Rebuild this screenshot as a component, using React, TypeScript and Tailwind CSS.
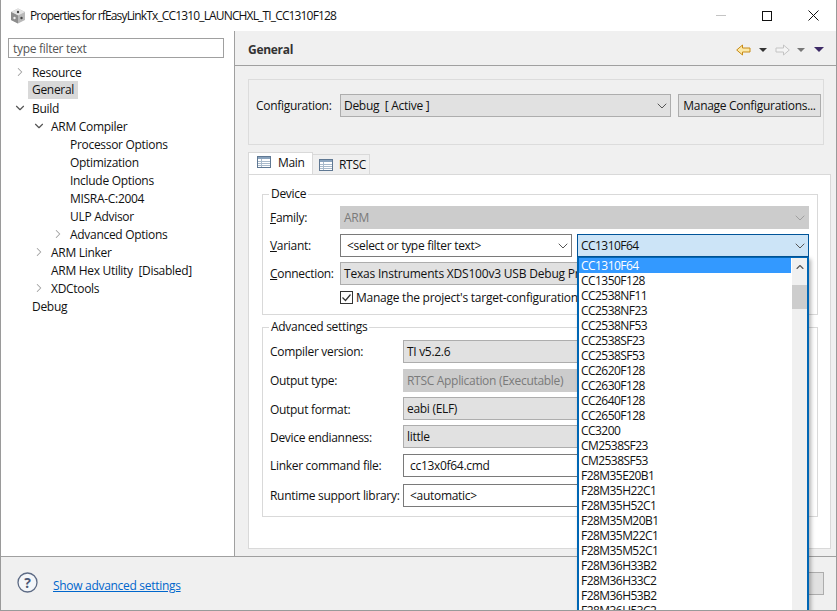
import React from 'react';
import { ChevronDown, ChevronRight, ChevronUp } from 'lucide-react';

const treeItems = [
  { label: 'Resource', depth: 0, arrow: 'right' },
  { label: 'General', depth: 0, selected: true },
  { label: 'Build', depth: 0, arrow: 'down' },
  { label: 'ARM Compiler', depth: 1, arrow: 'down' },
  { label: 'Processor Options', depth: 2 },
  { label: 'Optimization', depth: 2 },
  { label: 'Include Options', depth: 2 },
  { label: 'MISRA-C:2004', depth: 2 },
  { label: 'ULP Advisor', depth: 2 },
  { label: 'Advanced Options', depth: 2, arrow: 'right' },
  { label: 'ARM Linker', depth: 1, arrow: 'right' },
  { label: 'ARM Hex Utility  [Disabled]', depth: 1 },
  { label: 'XDCtools', depth: 1, arrow: 'right' },
  { label: 'Debug', depth: 0 },
];

const variants = [
  'CC1310F64', 'CC1350F128', 'CC2538NF11', 'CC2538NF23', 'CC2538NF53', 'CC2538SF23', 'CC2538SF53',
  'CC2620F128', 'CC2630F128', 'CC2640F128', 'CC2650F128', 'CC3200', 'CM2538SF23', 'CM2538SF53',
  'F28M35E20B1', 'F28M35H22C1', 'F28M35H52C1', 'F28M35M20B1', 'F28M35M22C1', 'F28M35M52C1',
  'F28M36H33B2', 'F28M36H33C2', 'F28M36H53B2', 'F28M36H53C2',
];

const paddings = ['pl-[12px]', 'pl-[31px]', 'pl-[50px]'];

function Chevron({ className = 'text-[#555]' }: { className?: string }) {
  return <ChevronDown size={16} strokeWidth={1.5} className={`shrink-0 ${className}`} />;
}

function Select({ value, kind = 'combo', className = '' }: { value: string; kind?: 'combo' | 'disabled' | 'text'; className?: string }) {
  const styles = {
    combo: 'bg-[#e1e1e1] border-[#adadad] text-[#111]',
    disabled: 'bg-[#cccccc] border-[#cccccc] text-[#7a7a7a]',
    text: 'bg-white border-[#7a7a7a] text-[#111]',
  }[kind];
  return (
    <div className={`h-[23px] border flex items-center justify-between pl-[3px] whitespace-pre overflow-hidden ${styles} ${className}`}>
      <span className={kind === 'text' ? 'pl-[3px]' : ''}>{value}</span>
      {kind === 'text' ? null : <Chevron className={kind === 'disabled' ? 'text-[#a0a0a0]' : 'text-[#555]'} />}
    </div>
  );
}

function TabIcon() {
  return (
    <svg width="14" height="12" viewBox="0 0 14 12" className="shrink-0">
      <rect x="0.5" y="0.5" width="13" height="11" fill="#fff" stroke="#5f7893" />
      <rect x="1" y="1" width="12" height="2" fill="#8aa3bd" />
      <path d="M1 5.5h12M1 7.5h12M1 9.5h12M4.5 3v8" stroke="#a9bacb" />
    </svg>
  );
}

function Legend({ children }: { children: string }) {
  return <span className="absolute left-[6px] top-[-9px] bg-white px-[2px] leading-[16px]">{children}</span>;
}

function Label({ text, mnemonic }: { text: string; mnemonic?: boolean }) {
  return mnemonic ? (
    <span><span className="underline">{text[0]}</span>{text.slice(1)}</span>
  ) : (
    <span className="whitespace-nowrap">{text}</span>
  );
}

export default function App() {
  return (
    <div
      className="relative w-[837px] h-[611px] overflow-hidden bg-white text-[12px] leading-[15px] tracking-[-0.3px] text-[#111] border-x border-b border-[#9a9a9a] flex flex-col"
      style={{ fontFamily: '"Open Sans", "Noto Sans", sans-serif' }}
    >
      {/* title bar */}
      <div className="h-[31px] shrink-0 flex items-center bg-white">
        <svg width="18" height="18" viewBox="0 0 18 18" className="ml-[8px] mr-[3px]">
          <path d="M9 1.5 16 5v8l-7 3.5L2 13V5z" fill="#b9b9b9" />
          <path d="M9 1.5 16 5 9 8.5 2 5z" fill="#e4e4e4" />
          <path d="M9 8.5v8L2 13V5z" fill="#8d8d8d" />
          <circle cx="9" cy="5" r="1.2" fill="#444" />
          <circle cx="5.5" cy="11" r="1.2" fill="#eee" />
          <circle cx="12.5" cy="11" r="1.2" fill="#444" />
        </svg>
        <span className="tracking-[-0.85px]">Properties for rfEasyLinkTx_CC1310_LAUNCHXL_TI_CC1310F128</span>
        <div className="ml-auto flex items-center">
          <div className="w-[46px] flex justify-center"><div className="w-[10px] h-px bg-[#c4c4c4]" /></div>
          <div className="w-[46px] flex justify-center"><div className="w-[10px] h-[10px] border border-[#111]" /></div>
          <div className="w-[46px] flex justify-center">
            <svg width="11" height="11" viewBox="0 0 11 11"><path d="M.5.5l10 10M10.5.5l-10 10" stroke="#111" /></svg>
          </div>
        </div>
      </div>

      <div className="flex-1 min-h-0 flex">
        {/* left tree */}
        <div className="w-[234px] shrink-0 border-r border-[#a0a0a0] bg-white pt-[7px] px-[7px]">
          <div className="h-[20px] w-[216px] border border-[#a0a0a0] px-[4px] flex items-center text-[#555]">type filter text</div>
          <div className="mt-[5px] -mx-[7px]">
            {treeItems.map((item) => (
              <div key={item.label} className={`h-[18px] flex items-center whitespace-pre ${paddings[item.depth]}`}>
                <span className="w-[19px] shrink-0 flex justify-start">
                  {item.arrow === 'right' && <ChevronRight size={14} strokeWidth={1.75} className="text-[#a0a0a0]" />}
                  {item.arrow === 'down' && <ChevronDown size={14} strokeWidth={2} className="text-[#555]" />}
                </span>
                <span className={item.selected ? 'bg-[#d9d9d9] px-[4px] -mx-[4px] leading-[18px]' : ''}>{item.label}</span>
              </div>
            ))}
          </div>
        </div>

        {/* right pane */}
        <div className="flex-1 min-w-0 bg-[#f0f0f0] flex flex-col">
          <div className="h-[35px] shrink-0 border-b border-[#a0a0a0] flex items-center pl-[13px] pr-[12px] pt-[3px]">
            <span className="font-bold text-[#333]">General</span>
            <div className="ml-auto flex items-center">
              <svg width="15" height="12" viewBox="0 0 15 12"><path d="M.7 6 6.5 1v3h7.5v4H6.5v3z" fill="#fce9a8" stroke="#c88b16" /></svg>
              <span className="ml-[8px] w-0 h-0 border-x-[4px] border-x-transparent border-t-[4px] border-t-[#333]" />
              <svg width="15" height="12" viewBox="0 0 15 12" className="ml-[8px]"><path d="M14.3 6 8.5 1v3H1v4h7.5v3z" fill="#f4f4f4" stroke="#c4c4c4" /></svg>
              <span className="ml-[7px] w-0 h-0 border-x-[4px] border-x-transparent border-t-[4px] border-t-[#777]" />
              <span className="ml-[9px] w-0 h-0 border-x-[5px] border-x-transparent border-t-[5px] border-t-[#3d2a66]" />
            </div>
          </div>

          <div className="flex-1 min-h-0 pl-[13px] pr-[5px] pt-[13px] pb-[7px] flex flex-col">
            {/* configuration */}
            <div className="h-[66px] mr-[7px] shrink-0 border border-[#dcdcdc] pl-[7px] pr-[3px] pt-[14px]">
              <div className="flex items-center">
                <span className="w-[84px] shrink-0">Configuration:</span>
                <Select value="Debug  [ Active ]" className="w-[331px] shrink-0" />
                <div className="h-[23px] w-[143px] shrink-0 border border-[#adadad] bg-[#e1e1e1] ml-[7px] flex items-center justify-center">Manage Configurations...</div>
              </div>
            </div>

            {/* tabs */}
            <div className="mt-[7px] h-[22px] shrink-0 flex items-end">
              <div className="h-[22px] w-[65px] bg-white border border-b-0 border-[#d9d9d9] flex items-center gap-[7px] pl-[8px] pb-[3px]"><TabIcon />Main</div>
              <div className="h-[20px] w-[57px] bg-[#f0f0f0] border border-l-0 border-b-0 border-[#d9d9d9] flex items-center gap-[6px] pl-[6px]"><TabIcon />RTSC</div>
            </div>

            <div className="flex-1 min-h-0 bg-white border border-[#d9d9d9] pl-[13px] pr-[12px] pt-[19px]">
              {/* device group */}
              <div className="relative h-[121px] border border-[#d9d9d9] pl-[7px] pr-[8px] pt-[11px]">
                <Legend>Device</Legend>
                <div className="grid grid-cols-[70px_1fr] gap-y-[5px] items-center">
                  <Label text="Family:" mnemonic />
                  <Select value="ARM" kind="disabled" />
                  <Label text="Variant:" mnemonic />
                  <div className="flex gap-[5px]">
                    <div className="w-[232px] h-[23px] bg-white border border-[#7a7a7a] flex items-center justify-between pl-[6px]">
                      <span>&lt;select or type filter text&gt;</span>
                      <Chevron />
                    </div>
                    <div className="flex-1 h-[23px] bg-[#cce4f7] border border-[#005499] flex items-center justify-between pl-[3px]">
                      <span className="tracking-[-0.55px]">CC1310F64</span>
                      <Chevron />
                    </div>
                  </div>
                  <Label text="Connection:" mnemonic />
                  <Select value="Texas Instruments XDS100v3 USB Debug Probe" className="tracking-[-0.2px]" />
                  <span />
                  <div className="flex items-center gap-[3px]">
                    <span className="w-[13px] h-[13px] border border-[#333] flex items-center justify-center">
                      <svg width="11" height="11" viewBox="0 0 11 11"><path d="m1.5 5.5 3 3 5-6" fill="none" stroke="#333" strokeWidth="1.2" /></svg>
                    </span>
                    <span className="whitespace-pre tracking-[-0.25px]">Manage the project's target-configuration file automatically</span>
                  </div>
                </div>
              </div>

              {/* advanced group */}
              <div className="relative mt-[12px] h-[190px] border border-[#d9d9d9] pl-[7px] pr-[8px] pt-[12px]">
                <Legend>Advanced settings</Legend>
                <div className="grid grid-cols-[133px_1fr] items-center gap-y-[6px]">
                  <Label text="Compiler version:" />
                  <Select value="TI v5.2.6" />
                  <Label text="Output type:" />
                  <Select value="RTSC Application (Executable)" kind="disabled" />
                  <Label text="Output format:" />
                  <Select value="eabi (ELF)" className="-mt-px" />
                  <Label text="Device endianness:" />
                  <Select value="little" className="-mt-px" />
                  <Label text="Linker command file:" />
                  <Select value="cc13x0f64.cmd" kind="text" />
                  <Label text="Runtime support library:" />
                  <Select value="<automatic>" kind="text" className="mt-px" />
                </div>
              </div>
            </div>
          </div>
        </div>
      </div>

      {/* bottom bar */}
      <div className="h-[54px] shrink-0 border-t border-[#a0a0a0] bg-[#f0f0f0] flex items-center pl-[16px] pr-[12px]">
        <svg width="21" height="21" viewBox="0 0 21 21" className="-mt-[3px]">
          <circle cx="10.5" cy="10.5" r="9.5" fill="#f4f6f9" stroke="#5d6b85" strokeWidth="1.3" />
          <text x="10.5" y="15.5" textAnchor="middle" fontSize="14" fontWeight="700" fill="#4a5876">?</text>
        </svg>
        <span className="ml-[15px] mt-[3px] text-[#0066cc] underline">Show advanced settings</span>
        <div className="ml-auto w-[80px] h-[23px] border border-[#adadad] bg-[#e1e1e1]" />
      </div>

      {/* open combo list */}
      <div className="absolute left-[576px] top-[257px] w-[232px] h-[360px] bg-white border-x-2 border-t border-[#0066b4] shadow-[2px_2px_4px_rgba(0,0,0,0.3)] flex tracking-[-0.55px]">
        <div className="w-[212px] shrink-0">
          {variants.map((v, i) => (
            <div key={v} className={`h-[15px] leading-[15px] pl-[2px] ${i === 0 ? 'bg-[#3399ff] text-white' : ''}`}>{v}</div>
          ))}
        </div>
        <div className="w-[15px] ml-px shrink-0 bg-[#f0f0f0] flex flex-col items-center">
          <div className="h-[17px] flex items-center"><ChevronUp size={12} strokeWidth={2.25} className="text-[#555]" /></div>
          <div className="w-full h-[24px] mt-[10px] bg-[#cdcdcd]" />
        </div>
      </div>
    </div>
  );
}
